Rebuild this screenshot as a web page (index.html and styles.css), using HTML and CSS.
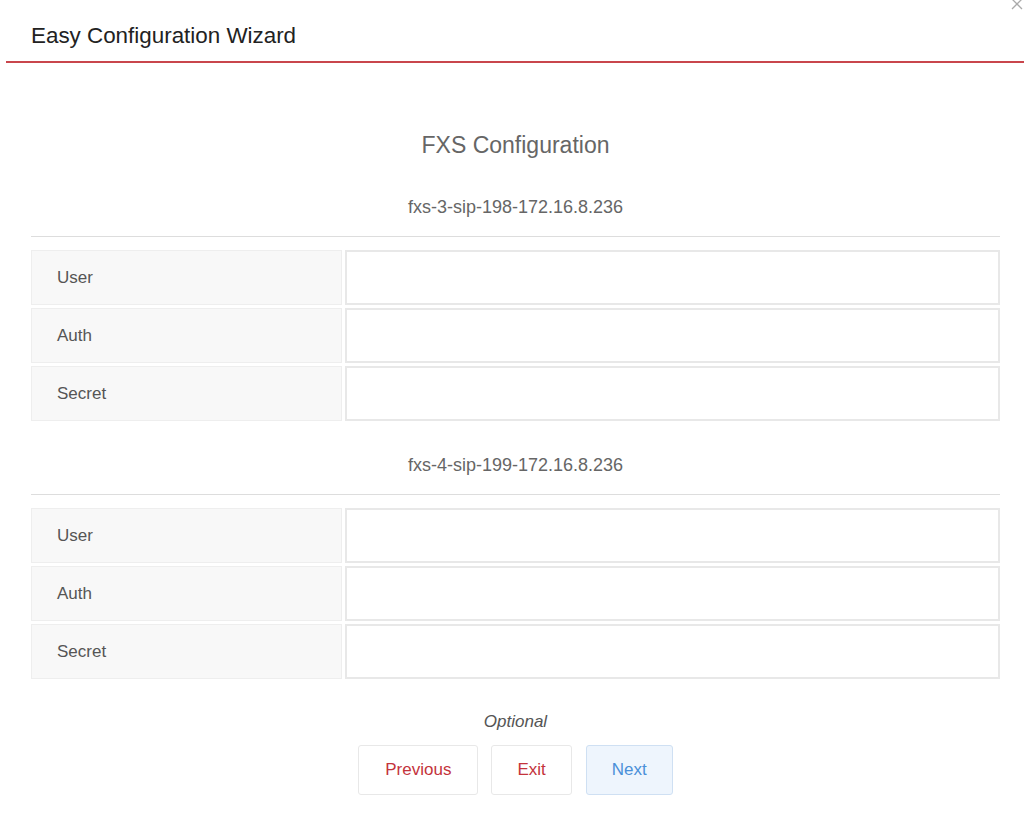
FILE: index.html
```html
<!DOCTYPE html>
<html lang="en">
<head>
    <meta charset="UTF-8">
    <meta name="viewport" content="width=device-width, initial-scale=1.0">
    <title>Easy Configuration Wizard</title>
    <link rel="stylesheet" href="styles.css">
</head>
<body>
    <div class="modal">
        <div class="modal-header">
            <h2 class="modal-title">Easy Configuration Wizard</h2>
            <button class="close" aria-label="Close">
                <svg width="12" height="12" viewBox="0 0 12 12">
                    <path d="M1 1L11 11M11 1L1 11" stroke="#aaa" stroke-width="1.3" fill="none"/>
                </svg>
            </button>
        </div>

        <div class="modal-body">
            <h3 class="step-title">FXS Configuration</h3>

            <div class="port">
                <div class="port-name">fxs-3-sip-198-172.16.8.236</div>
                <div class="field-list">
                    <div class="field">
                        <label class="field-label">User</label>
                        <input class="field-input" type="text">
                    </div>
                    <div class="field">
                        <label class="field-label">Auth</label>
                        <input class="field-input" type="text">
                    </div>
                    <div class="field">
                        <label class="field-label">Secret</label>
                        <input class="field-input" type="text">
                    </div>
                </div>
            </div>

            <div class="port">
                <div class="port-name">fxs-4-sip-199-172.16.8.236</div>
                <div class="field-list">
                    <div class="field">
                        <label class="field-label">User</label>
                        <input class="field-input" type="text">
                    </div>
                    <div class="field">
                        <label class="field-label">Auth</label>
                        <input class="field-input" type="text">
                    </div>
                    <div class="field">
                        <label class="field-label">Secret</label>
                        <input class="field-input" type="text">
                    </div>
                </div>
            </div>

            <p class="optional">Optional</p>
            <div class="actions">
                <button class="btn btn-danger btn-wide">Previous</button>
                <button class="btn btn-danger">Exit</button>
                <button class="btn btn-primary">Next</button>
            </div>
        </div>
    </div>
</body>
</html>
```

FILE: styles.css
```css
body {
    margin: 0;
    background: #fff;
    font-family: "Liberation Sans", Arial, sans-serif;
    color: #333;
}
.modal {
    padding-left: 6px;
}
.modal-header {
    position: relative;
    height: 61px;
    padding-left: 25px;
    border-bottom: 2px solid #c9464c;
}
.modal-title {
    margin: 0;
    padding-top: 23px;
    font-size: 22.4px;
    font-weight: normal;
    color: #222;
    line-height: 26px;
}
.close {
    position: absolute;
    top: -2px;
    right: 1px;
    padding: 0;
    border: none;
    background: none;
    line-height: 0;
    cursor: pointer;
}
.modal-body {
    padding: 0 24px 0 25px;
}
.step-title {
    margin: 0;
    padding-top: 67px;
    text-align: center;
    font-size: 23px;
    font-weight: normal;
    color: #666;
    line-height: 30px;
}
.port-name {
    margin-top: 36px;
    padding-bottom: 18px;
    border-bottom: 1px solid #ddd;
    text-align: center;
    font-size: 18px;
    color: #666;
    line-height: 22px;
}
.port + .port .port-name {
    margin-top: 33px;
}
.field-list {
    display: flex;
    flex-direction: column;
    gap: 3px;
    margin-top: 13px;
}
.field {
    display: grid;
    grid-template-columns: 311px 1fr;
    gap: 3px;
    height: 55px;
}
.field-label {
    display: flex;
    align-items: center;
    padding-left: 25px;
    background: #f8f8f8;
    border: 1px solid #eee;
    font-size: 17px;
    color: #555;
}
.field-input {
    margin: 0;
    padding: 0 12px;
    border: 2px solid #e8e8e8;
    background: #fff;
    font-size: 17px;
    outline: none;
}
.optional {
    margin: 32px 0 0;
    text-align: center;
    font-style: italic;
    font-size: 17px;
    color: #555;
    line-height: 22px;
}
.actions {
    display: flex;
    justify-content: center;
    gap: 13px;
    margin-top: 12px;
}
.btn {
    height: 50px;
    padding: 0 25px;
    border: 1px solid #e8e8e8;
    border-radius: 3px;
    background: #fff;
    font-family: inherit;
    font-size: 17px;
    cursor: pointer;
}
.btn-wide {
    padding: 0 26px;
}
.btn-danger {
    color: #c4343c;
}
.btn-primary {
    margin-left: 1px;
    background: #eef5fd;
    border-color: #cfe0f3;
    color: #4a90d9;
}
```
